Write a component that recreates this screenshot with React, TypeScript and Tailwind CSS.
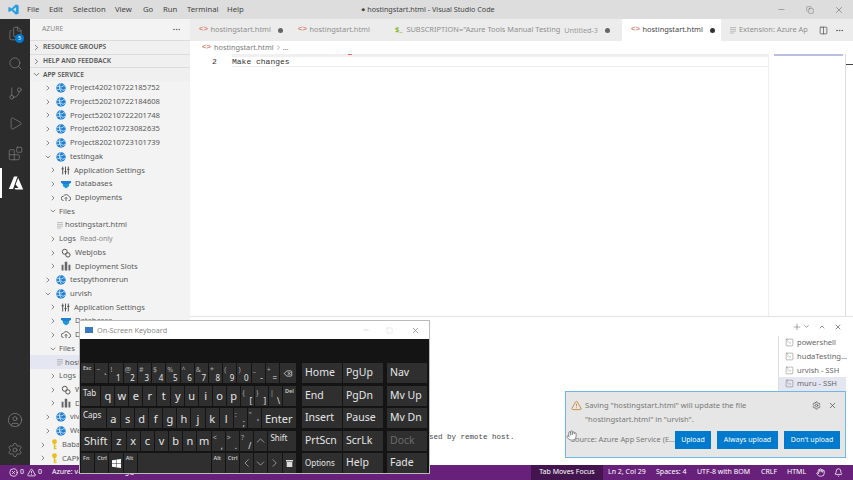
import React from "react";
import { Files, Search, GitBranch, Blocks, CircleUser, Settings, ChevronRight, ChevronDown, ChevronUp, Plus, X, Minus, Copy, Square, AlertTriangle, Play, CircleX, Columns2, MoreHorizontal, SquareTerminal, Hand, Bell, Delete } from "lucide-react";

const Globe = () => (
  <svg viewBox="0 0 16 16" className="w-[10px] h-[10px] shrink-0">
    <circle cx="8" cy="8" r="7.5" fill="#1f7fd6" />
    <path d="M2 6c3-2 4 1 7 0s3-3 5-1M2 10c3 2 5-2 7 0s3 2 5 0M7 1c-3 4-1 10 2 14" stroke="#cfe8fa" strokeWidth="1.6" fill="none" />
  </svg>
);
const KeyIc = () => (
  <svg viewBox="0 0 10 16" className="w-[7px] h-[11px] shrink-0">
    <circle cx="5" cy="4" r="3.5" fill="#e8c01c" />
    <path d="M4 7h2v8H4zM6 10h2v1.5H6zM6 13h2v1.5H6z" fill="#e8c01c" />
  </svg>
);
const Sliders = () => (
  <svg viewBox="0 0 16 16" className="w-[9px] h-[9px] shrink-0" stroke="#444" strokeWidth="1.6" fill="none">
    <path d="M3 1v14M8 1v14M13 1v14M1 5h4M6 10h4M11 6h4" />
  </svg>
);
const Db = () => (
  <svg viewBox="0 0 16 16" className="w-[10px] h-[10px] shrink-0">
    <path d="M0 3h16v3l-3 2H3L0 6z" fill="#1f7fd6" />
    <path d="M3 8h10v3l-5 4-5-4z" fill="#1a9bd8" />
  </svg>
);
const Deploy = () => (
  <svg viewBox="0 0 16 16" className="w-[10px] h-[10px] shrink-0" stroke="#555" strokeWidth="1.4" fill="none">
    <path d="M4 12a3.5 3.5 0 0 1 0-7 5 5 0 0 1 9 1 3 3 0 0 1-1 6" />
    <path d="M8 13V7M6 9l2-2 2 2" />
  </svg>
);
const Web = () => (
  <svg viewBox="0 0 16 16" className="w-[10px] h-[10px] shrink-0" stroke="#555" strokeWidth="1.6" fill="none">
    <circle cx="6" cy="6" r="4" />
    <circle cx="11" cy="11" r="3.5" />
  </svg>
);
const Slots = () => (
  <svg viewBox="0 0 16 16" className="w-[10px] h-[10px] shrink-0" fill="#666">
    <path d="M1 6h3v9H1zM6 1h4v14H6zM12 6h3v9h-3z" />
  </svg>
);
const FileLines = () => (
  <svg viewBox="0 0 10 12" className="w-[6px] h-[8px] shrink-0" stroke="#aaa" strokeWidth="1.2">
    <path d="M0 2h10M0 5h10M0 8h10M0 11h7" />
  </svg>
);

type Row = { t: string; pl: number; open?: boolean; icon?: React.ReactNode; noChev?: boolean; extra?: string; sel?: boolean };
const appChildren = (fileSel: boolean): Row[] => [
  { t: "Application Settings", pl: 19, icon: <Sliders /> },
  { t: "Databases", pl: 19, icon: <Db /> },
  { t: "Deployments", pl: 19, icon: <Deploy /> },
  { t: "Files", pl: 19, open: true },
  { t: "hostingstart.html", pl: 27, noChev: true, icon: <FileLines />, sel: fileSel },
  { t: "Logs", pl: 19, extra: "Read-only" },
  { t: "WebJobs", pl: 19, icon: <Web /> },
  { t: "Deployment Slots", pl: 19, icon: <Slots /> },
];
const rows: Row[] = [
  ...["Project420210722185752", "Project520210722184608", "Project520210722201748", "Project620210723082635", "Project820210723101739"].map((t) => ({ t, pl: 14, icon: <Globe /> })),
  { t: "testingak", pl: 14, open: true, icon: <Globe /> },
  ...appChildren(false),
  { t: "testpythonrerun", pl: 14, icon: <Globe /> },
  { t: "urvish", pl: 14, open: true, icon: <Globe /> },
  ...appChildren(true),
  { t: "vivishwebapp", pl: 14, icon: <Globe /> },
  { t: "WebApp2021", pl: 14, icon: <Globe /> },
  { t: "BabaKeyVault", pl: 9, icon: <KeyIc /> },
  { t: "CAPKeyVault", pl: 9, icon: <KeyIc /> },
];

const Tree = ({ r }: { r: Row }) => (
  <div className={`h-[13.73px] shrink-0 flex items-center whitespace-nowrap ${r.sel ? "bg-[#e4e6f1]" : ""}`} style={{ paddingLeft: r.pl }}>
    {r.noChev ? null : r.open ? (
      <ChevronDown className="w-[8px] h-[8px] text-[#555] shrink-0" />
    ) : (
      <ChevronRight className="w-[8px] h-[8px] text-[#555] shrink-0" />
    )}
    {r.icon ? <span className={r.noChev ? "" : "ml-[3.5px] mr-[4.5px]"}>{r.icon}</span> : <span className="w-[2px]" />}
    <span className={`text-[7.6px] text-[#5a5a5a] ${r.noChev ? "ml-[2px]" : ""}`}>{r.t}</span>
    {r.extra ? <span className="text-[7px] text-[#888] ml-[4px]">{r.extra}</span> : null}
  </div>
);

const Section = ({ t, open }: { t: string; open?: boolean }) => (
  <div className="h-[13.7px] shrink-0 flex items-center pl-[2px] border-t border-[#dcdcdc] bg-[#f0f0f0]">
    {open ? <ChevronDown className="w-[9px] h-[9px] text-[#555]" /> : <ChevronRight className="w-[9px] h-[9px] text-[#555]" />}
    <span className="ml-[2px] text-[6.7px] font-semibold text-[#555]">{t}</span>
  </div>
);

const Tab = ({ w, t, dot, active, prefix, glyph, sub }: { w: string; t: string; dot?: boolean; active?: boolean; prefix?: React.ReactNode; glyph?: boolean; sub?: string }) => (
  <div className={`${w} h-full shrink-0 flex items-center pl-[9px] overflow-hidden whitespace-nowrap ${active ? "bg-white text-[#444]" : "bg-[#ececec] text-[#8f8f8f]"}`}>
    {prefix ? prefix : glyph ? <span className="text-[7.5px] font-bold text-[#d8856c] mr-[2.5px] font-['Liberation_Mono',monospace]">&lt;&gt;</span> : null}
    <span className="text-[7.4px]">{t}</span>
    {sub ? <span className="text-[7.2px] text-[#999] ml-[4px]">{sub}</span> : null}
    {dot ? <span className={`w-[5px] h-[5px] rounded-full ml-[7px] ${active ? "bg-[#333]" : "bg-[#666]"}`} /> : null}
  </div>
);

const Key = ({ l, top, bot, size, flex, dim, children }: { l?: string; top?: string; bot?: string; size?: "s" | "m" | "l"; flex?: number; dim?: boolean; children?: React.ReactNode }) => (
  <div className={`bg-[#2f2f2f] h-full flex min-w-0 overflow-hidden leading-none ${dim ? "text-[#6a6a6a]" : "text-[#e6e6e6]"}`} style={{ flex: flex ?? 1 }}>
    {children ? (
      <div className="w-full h-full flex items-center justify-center">{children}</div>
    ) : top !== undefined ? (
      <div className="w-full h-full flex flex-col pt-[3px] px-[1px] text-[7px]">
        <span className="text-[#aaa]">{top}</span>
        <span className="self-end mt-[1px] pr-[1px] text-[8px]">{bot}</span>
      </div>
    ) : size === "s" ? (
      <div className="pl-[2px] pt-[3px] text-[5.5px] font-semibold text-[#ccc]">{l}</div>
    ) : size === "m" ? (
      <div className="pl-[2px] pt-[3px] text-[8px]">{l}</div>
    ) : size === "l" ? (
      <div className="w-full h-full pl-[3px] flex items-center text-[11px] whitespace-nowrap">{l}</div>
    ) : (
      <div className="w-full h-full flex items-center justify-center text-[11px]">{l}</div>
    )}
  </div>
);

const KRow = ({ children }: { children: React.ReactNode }) => <div className="h-[20px] flex gap-[1px]">{children}</div>;

const NavKey = ({ l, small, dim }: { l: string; small?: boolean; dim?: boolean }) => (
  <div className={`w-[40px] h-[20px] bg-[#2f2f2f] flex items-center pl-[3px] whitespace-nowrap ${small ? "text-[8px]" : "text-[10.5px]"} ${dim ? "text-[#6a6a6a]" : "text-[#e6e6e6]"}`}>{l}</div>
);

const Keyboard = () => (
  <div className="absolute left-[79px] top-[320px] w-[351px] h-[154px] bg-[#141414] border border-[#bbb] flex flex-col font-['Noto_Sans',sans-serif]">
    <div className="h-[18px] shrink-0 bg-white flex items-center pl-[5px] pr-[9px]">
      <span className="w-[8px] h-[6px] bg-[#3a78c4] mr-[4px]" />
      <span className="text-[7.3px] text-[#8a8a8a]">On-Screen Keyboard</span>
      <Minus className="w-[8px] h-[8px] text-[#ccc] ml-auto" />
      <Square className="w-[7px] h-[7px] text-[#ddd] ml-[16px]" />
      <X className="w-[9px] h-[9px] text-[#888] ml-[18px]" />
    </div>
    <div className="mt-[24px] pl-[1px] flex gap-[6px]">
      <div className="w-[215px] flex flex-col gap-[2.5px]">
        <KRow>
          <Key l="Esc" size="s" />
          <Key top="~" bot="`" />
          <Key top="!" bot="1" />
          <Key top="@" bot="2" />
          <Key top="#" bot="3" />
          <Key top="$" bot="4" />
          <Key top="%" bot="5" />
          <Key top="^" bot="6" />
          <Key top="&" bot="7" />
          <Key top="*" bot="8" />
          <Key top="(" bot="9" />
          <Key top=")" bot="0" />
          <Key top="_" bot="-" />
          <Key top="+" bot="=" />
          <Key flex={1.2}><Delete className="w-[12px] h-[9px]" /></Key>
        </KRow>
        <KRow>
          <Key l="Tab" size="m" flex={1.5} />
          {"qwertyuiop".split("").map((c) => <Key key={c} l={c} />)}
          <Key top="{" bot="[" />
          <Key top="}" bot="]" />
          <Key top="|" bot="\" />
          <Key l="Del" size="s" />
        </KRow>
        <KRow>
          <Key l="Caps" size="m" flex={1.9} />
          {"asdfghjkl".split("").map((c) => <Key key={c} l={c} />)}
          <Key top=":" bot=";" />
          <Key top={'"'} bot="'" />
          <Key l="Enter" size="l" flex={2.6} />
        </KRow>
        <KRow>
          <Key l="Shift" size="l" flex={2.3} />
          {"zxcvbnm".split("").map((c) => <Key key={c} l={c} />)}
          <Key top="<" bot="," />
          <Key top=">" bot="." />
          <Key top="?" bot="/" />
          <Key><ChevronUp className="w-[13px] h-[13px]" strokeWidth={1} /></Key>
          <Key l="Shift" size="m" flex={2.1} />
        </KRow>
        <KRow>
          <Key l="Fn" size="s" />
          <Key l="Ctrl" size="s" />
          <Key>
            <svg viewBox="0 0 10 10" className="w-[9px] h-[9px]" fill="#fff"><path d="M0 1.3l4.4-.6v4H0zM5 .6L10 0v4.7H5zM0 5.3h4.4v4L0 8.7zM5 5.3h5V10l-5-.6z" /></svg>
          </Key>
          <Key l="Alt" size="s" />
          <Key flex={5.5} />
          <Key l="Alt" size="s" />
          <Key l="Ctrl" size="s" />
          <Key><ChevronRight className="w-[14px] h-[14px] rotate-180" strokeWidth={1} /></Key>
          <Key><ChevronDown className="w-[13px] h-[13px]" strokeWidth={1} /></Key>
          <Key><ChevronRight className="w-[14px] h-[14px]" strokeWidth={1} /></Key>
          <Key><svg viewBox="0 0 10 10" className="w-[7px] h-[7px]" fill="#ddd"><path d="M0 0h10v2H0zM1 3h8v7H1z" /></svg></Key>
        </KRow>
      </div>
      <div className="grid grid-cols-[40px_40px_40px] gap-y-[2.5px] gap-x-[1px] w-[125px]">
        {[["Home", "PgUp", "Nav"], ["End", "PgDn", "Mv Up"], ["Insert", "Pause", "Mv Dn"], ["PrtScn", "ScrLk", "Dock"], ["Options", "Help", "Fade"]].map((r) => (
          <React.Fragment key={r[0]}>
            <NavKey l={r[0]} small={r[0] === "Options"} />
            <NavKey l={r[1]} />
            <div className="ml-[3px]"><NavKey l={r[2]} dim={r[2] === "Dock"} /></div>
          </React.Fragment>
        ))}
      </div>
    </div>
  </div>
);

const Notification = () => (
  <div className="absolute left-[565px] top-[391px] w-[281px] h-[67px] bg-[#e6e6e6] border border-[#6fb8e4] flex flex-col pl-[5px] pr-[5px] font-['Noto_Sans',sans-serif]">
    <div className="flex items-center h-[13px] mt-[7px]">
      <AlertTriangle className="w-[11px] h-[11px] text-[#c98a3a] shrink-0" />
      <span className="ml-[3px] text-[7.6px] text-[#777]">Saving "hostingstart.html" will update the file</span>
      <Settings className="w-[9px] h-[9px] text-[#555] ml-auto" />
      <X className="w-[9px] h-[9px] text-[#555] ml-[7px] mr-[3px]" />
    </div>
    <div className="ml-[14px] h-[13px] mt-[1px] flex items-center text-[7.6px] text-[#777]">"hostingstart.html" in "urvish".</div>
    <div className="flex items-center h-[18px] mt-[5px]">
      <span className="text-[7.4px] text-[#777] w-[104px] whitespace-nowrap">Source: Azure App Service (E...</span>
      <span className="w-[36px] h-[18px] bg-[#007acc] text-white text-[7px] flex items-center justify-center">Upload</span>
      <span className="ml-[6px] w-[61px] h-[18px] bg-[#007acc] text-white text-[7px] flex items-center justify-center">Always upload</span>
      <span className="ml-[6px] w-[56px] h-[18px] bg-[#007acc] text-white text-[7px] flex items-center justify-center">Don't upload</span>
    </div>
  </div>
);

const termRows = ["powershell", "hudaTesting...", "urvish - SSH", "muru - SSH"];

export default function App() {
  return (
    <div className="relative w-[853px] h-[480px] overflow-hidden flex flex-col bg-white font-['Noto_Sans',sans-serif]">
      <div className="h-[19px] shrink-0 bg-[#dddddd] flex items-center text-[#444]">
        <div className="w-[27px] flex justify-center shrink-0">
          <svg viewBox="0 0 16 16" className="w-[11px] h-[11px]">
            <path d="M11.5 0.5L15.5 2.3V13.7L11.5 15.5L5 9.3L2 11.6L0.5 10.8V5.2L2 4.4L5 6.7ZM11.5 4.8L7.5 8L11.5 11.2Z" fill="#2a9fe0" />
          </svg>
        </div>
        <div className="w-[334px] shrink-0 flex text-[7.7px]">
          <span className="w-[22px]">File</span>
          <span className="w-[24px]">Edit</span>
          <span className="w-[42px]">Selection</span>
          <span className="w-[28px]">View</span>
          <span className="w-[20px]">Go</span>
          <span className="w-[24px]">Run</span>
          <span className="w-[40px]">Terminal</span>
          <span>Help</span>
        </div>
        <span className="text-[7.2px] text-[#444] whitespace-nowrap">● hostingstart.html - Visual Studio Code</span>
        <div className="ml-auto flex items-center pr-[9px] gap-[20px] text-[#555]">
          <Minus className="w-[9px] h-[9px]" strokeWidth={1.2} />
          <Copy className="w-[8px] h-[8px]" strokeWidth={1.2} />
          <X className="w-[10px] h-[10px]" strokeWidth={1.2} />
        </div>
      </div>

      <div className="flex-1 flex min-h-0">
        <div className="w-[30px] shrink-0 bg-[#2c2c2c] flex flex-col items-center text-[#8b8b8b]">
          <div className="relative h-[29px] w-full flex items-center justify-center">
            <Files className="w-[15px] h-[15px]" strokeWidth={1} />
            <span className="absolute left-[15px] top-[15px] w-[9px] h-[9px] rounded-full bg-[#007acc] text-white text-[5.5px] flex items-center justify-center">5</span>
          </div>
          <div className="h-[30px] flex items-center"><Search className="w-[15px] h-[15px]" strokeWidth={1} /></div>
          <div className="h-[30px] flex items-center"><GitBranch className="w-[15px] h-[15px]" strokeWidth={1} /></div>
          <div className="h-[30px] flex items-center"><Play className="w-[15px] h-[15px]" strokeWidth={1} /></div>
          <div className="h-[30px] flex items-center"><Blocks className="w-[15px] h-[15px]" strokeWidth={1} /></div>
          <div className="h-[30px] w-full flex items-center justify-center border-l-2 border-white text-white">
            <svg viewBox="0 0 16 16" className="w-[16px] h-[16px]" fill="#fff">
              <path d="M6 1.5h3.5L5 14H.8zM10.2 3l5 11.5H7.5l-1-1.5h4L7.6 9.5z" />
            </svg>
          </div>
          <div className="mt-auto h-[30px] flex items-center"><CircleUser className="w-[16px] h-[16px]" strokeWidth={1} /></div>
          <div className="h-[30px] flex items-center"><Settings className="w-[16px] h-[16px]" strokeWidth={1} /></div>
        </div>

        <div className="w-[160px] shrink-0 bg-[#f3f3f3] flex flex-col overflow-hidden">
          <div className="h-[21px] shrink-0 flex items-center pl-[12px] pr-[9px] justify-between">
            <span className="text-[6.8px] text-[#888]">AZURE</span>
            <MoreHorizontal className="w-[9px] h-[9px] text-[#666]" />
          </div>
          <Section t="RESOURCE GROUPS" />
          <Section t="HELP AND FEEDBACK" />
          <Section t="APP SERVICE" open />
          {rows.map((r, i) => <Tree key={i} r={r} />)}
        </div>

        <div className="flex-1 min-w-0 flex flex-col">
          <div className="h-[22px] shrink-0 flex bg-[#ececec]">
            <Tab w="w-[99px]" t="hostingstart.html" dot glyph />
            <Tab w="w-[97px]" t="hostingstart.html" glyph />
            <Tab w="w-[236px]" t={'SUBSCRIPTION="Azure Tools Manual Testing'} sub="Untitled-3" dot prefix={<span className="text-[7.5px] font-bold text-[#8ab82e] mr-[4px]">$_</span>} />
            <Tab w="w-[99px]" t="hostingstart.html" dot glyph active />
            <Tab w="w-[91px]" t="Extension: Azure Ap" prefix={<span className="mr-[3px]"><FileLines /></span>} />
            <div className="flex-1 flex items-center gap-[7px] pl-[7px] text-[#555]">
              <Columns2 className="w-[9px] h-[9px]" />
              <MoreHorizontal className="w-[9px] h-[9px]" />
            </div>
          </div>
          <div className="h-[13px] shrink-0 flex items-center pl-[12px] text-[7.3px] text-[#777]">
            <span className="text-[7.5px] font-bold text-[#d8856c] mr-[3px] font-['Liberation_Mono',monospace]">&lt;&gt;</span>
            hostingstart.html <ChevronRight className="w-[7px] h-[7px] mx-[1px]" /> ...
          </div>
          <div className="h-[262px] shrink-0 flex">
            <div className="flex-1 min-w-0 flex">
              <span className="w-[42px] pl-[22px] pt-[3px] text-[8px] leading-[10px] font-['Liberation_Mono',monospace] text-[#333]">2</span>
              <div className="flex-1 min-w-0 flex flex-col">
                <div className="h-[3px] bg-[#f0f0f0]">
                  <div className="ml-[116px] w-[4px] h-[1px] bg-[#e66]" />
                </div>
                <div className="h-[10px] border-b border-[#eee] text-[8px] leading-[10px] font-['Liberation_Mono',monospace] text-[#333] whitespace-pre">Make changes</div>
              </div>
            </div>
            <div className="w-[77px] shrink-0 border-l border-[#eee]">
              <div className="ml-[5px] w-[69px] h-[2px] bg-[#b9bfe0]" />
            </div>
            <div className="w-[8px] shrink-0 border-l border-[#ddd]">
              <div className="mt-[10px] h-[1px] bg-[#444]" />
            </div>
          </div>
          <div className="flex-1 min-h-0 border-t border-[#e2e2e2] flex relative">
            <div className="flex-1 min-w-0 pt-[115px] pl-[176px] text-[7.5px] font-['Liberation_Mono',monospace] text-[#444] whitespace-nowrap">Connection closed by remote host.</div>
            <div className="w-[75px] shrink-0 flex flex-col">
              <div className="h-[19px] flex items-center justify-end gap-[1px] pr-[11px] text-[#555]">
                <Plus className="w-[10px] h-[10px]" strokeWidth={1.2} />
                <ChevronDown className="w-[7px] h-[7px]" />
                <ChevronUp className="w-[8px] h-[8px] ml-[7px]" />
                <X className="w-[8px] h-[8px] ml-[7px]" />
              </div>
              <div className="border-l border-[#ddd] flex flex-col w-[68px] shrink-0">
                {termRows.map((t, i) => (
                  <div key={t} className={`h-[13.7px] flex items-center pl-[6px] text-[7.6px] text-[#666] whitespace-nowrap ${i === 3 ? "bg-[#e4e6f1]" : ""}`}>
                    <SquareTerminal className="w-[9px] h-[9px] mr-[3px] shrink-0" strokeWidth={1.2} />{t}
                  </div>
                ))}
              </div>
            </div>
          </div>
        </div>
      </div>

      <div className="h-[15px] shrink-0 bg-[#68217a] flex items-center text-white text-[7px] whitespace-nowrap">
        <CircleX className="w-[9px] h-[9px] ml-[9px]" />
        <span className="ml-[2px]">0</span>
        <AlertTriangle className="w-[9px] h-[9px] ml-[3px]" />
        <span className="ml-[2px]">0</span>
        <span className="ml-[10px]">Azure: v-mudasimalling@microsoft.com</span>
        <div className="ml-auto flex items-center h-full">
          <span className="h-full w-[72px] bg-[#42154e] flex items-center justify-center">Tab Moves Focus</span>
          <span className="ml-[5px] w-[48px]">Ln 2, Col 29</span>
          <span className="w-[41px]">Spaces: 4</span>
          <span className="w-[64px]">UTF-8 with BOM</span>
          <span className="w-[26px]">CRLF</span>
          <span className="w-[29px]">HTML</span>
          <Hand className="w-[9px] h-[9px]" />
          <Bell className="w-[9px] h-[9px] ml-[9px] mr-[10px]" />
        </div>
      </div>

      <Keyboard />
      <Notification />
      <Hand className="absolute left-[566px] top-[429px] w-[11px] h-[13px] text-[#333] fill-white" strokeWidth={1.2} />
    </div>
  );
}
